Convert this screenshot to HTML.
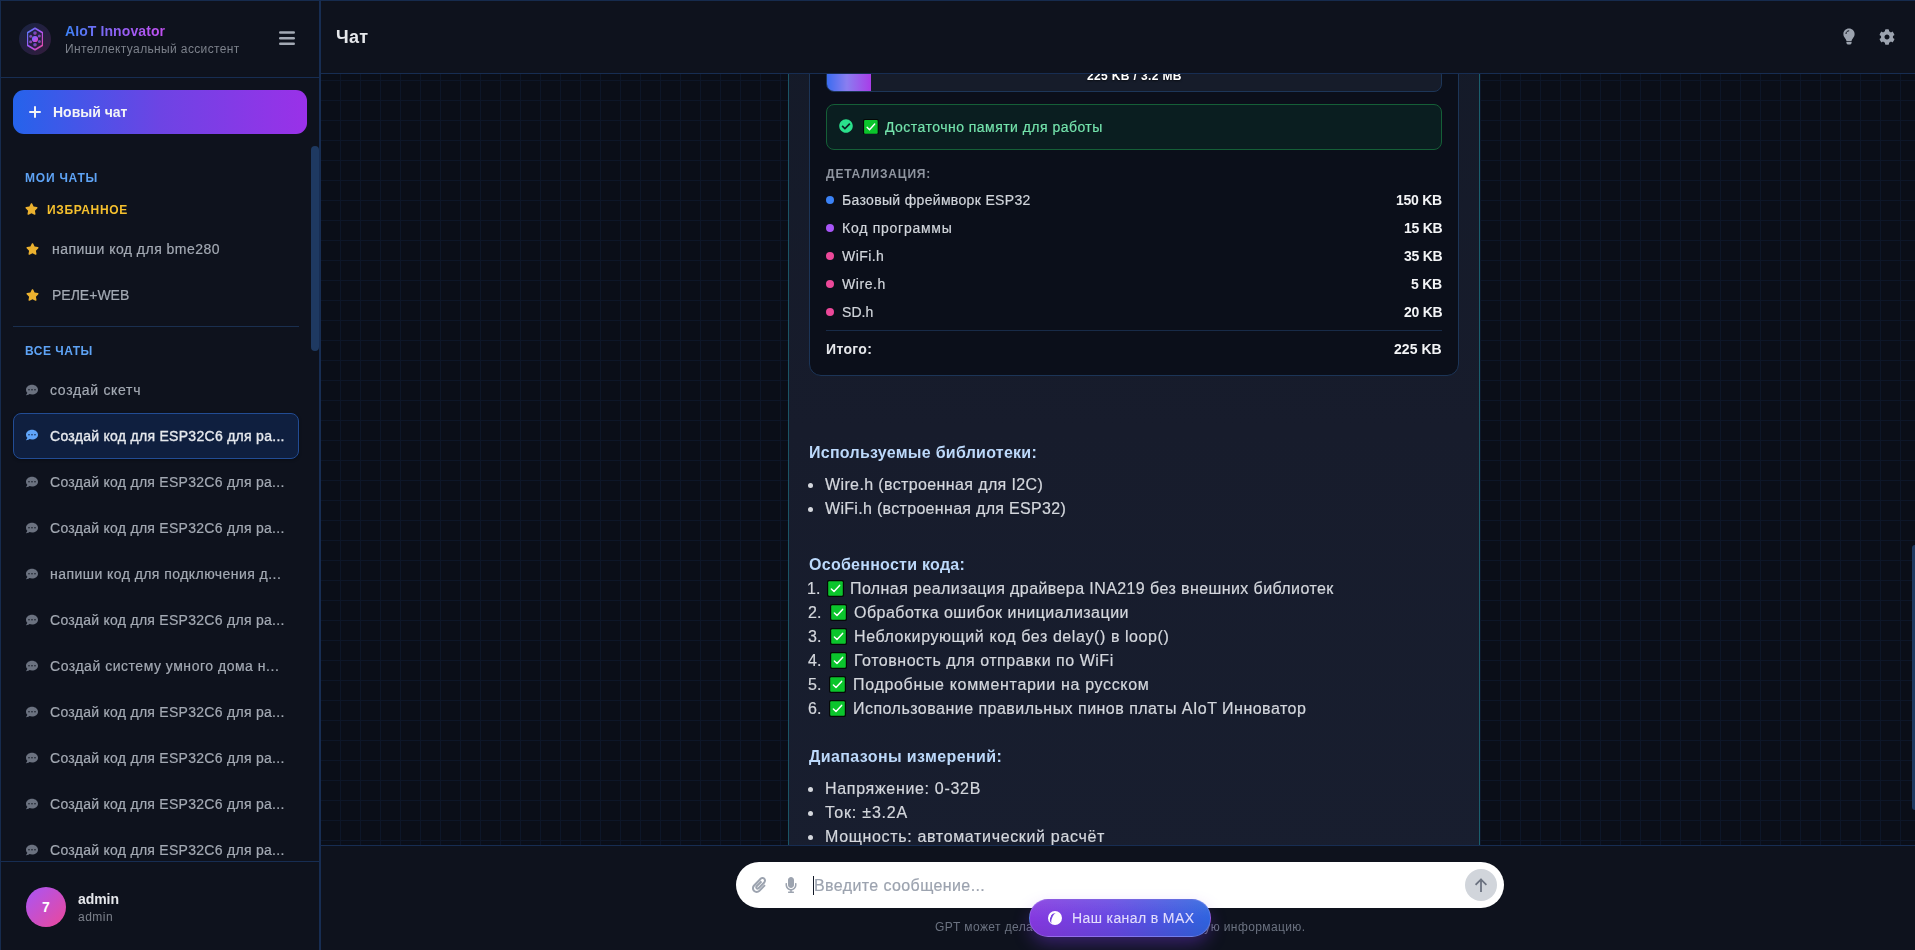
<!DOCTYPE html>
<html lang="ru">
<head>
<meta charset="utf-8">
<title>AIoT Innovator — Чат</title>
<style>
*{box-sizing:border-box;margin:0;padding:0}
html,body{width:1915px;height:950px;overflow:hidden}
body{position:relative;background:#0a0e18;font-family:"Liberation Sans",sans-serif;color:#d1d5db}
.abs{position:absolute}
.nw{white-space:nowrap;will-change:transform}
#topline{left:0;top:0;width:1915px;height:1px;background:#162b4e;z-index:50}
#leftline{left:0;top:0;width:1px;height:950px;background:#162b4e;z-index:50}
#mainline{left:320px;top:0;width:1px;height:950px;background:#172d52;z-index:50}
#sidebar{left:0;top:0;width:320px;height:950px;background:#0e121d;border-right:1px solid #172d52}
#sbhead{left:0;top:0;width:319px;height:78px;border-bottom:1px solid #172d52}
#logo{left:19px;top:23px;width:32px;height:32px;border-radius:50%;background:linear-gradient(135deg,#1a2442 0%,#251f40 55%,#361c3d 100%);overflow:visible}
#burger{left:279px;top:31px;width:16px;height:14px}
#newchat{left:13px;top:90px;width:294px;height:44px;border-radius:11px;background:linear-gradient(90deg,#2563eb 0%,#6d44e4 50%,#9a31e8 100%)}
#sblist{left:0;top:0;width:319px;height:861px;overflow:hidden;clip-path:inset(138px 0 0 0)}
#sbthumb{left:311px;top:146px;width:8px;height:205px;border-radius:4px;background:#1e3961}
.item{left:13px;width:286px;height:46px;border-radius:8px}
.item.active{background:#0f1f3f;border:1px solid #224c94;box-shadow:0 1px 3px rgba(0,0,0,.35)}
#sbfoot{left:0;top:861px;width:319px;height:1px;background:#172d52}
#avatar{left:26px;top:887px;width:40px;height:40px;border-radius:50%;background:linear-gradient(135deg,#a855f7,#ec4899);color:#fff;font-weight:700;font-size:14px;text-align:center;line-height:40px}
#mainhead{left:320px;top:0;width:1595px;height:74px;background:#0e121d;border-bottom:1px solid #172d52;z-index:3}
#chat{left:320px;top:74px;width:1595px;height:771px;overflow:hidden;background-color:#0a0e18;
 background-image:linear-gradient(#0d1628 1px,transparent 1px),linear-gradient(90deg,#0d1628 1px,transparent 1px);
 background-size:20px 20px;background-position:0 6px,0 0}
#pgthumb{left:1912px;top:545px;width:6px;height:265px;border-radius:3px;background:#1e3961;z-index:5}
#footer{left:320px;top:845px;width:1595px;height:105px;background:#0e121d;border-top:1px solid #172d52;z-index:3}
#chatclip{left:320px;top:74px;width:1595px;height:771px;overflow:hidden}
#bubble{left:788px;top:-20px;width:692px;height:900px;background:linear-gradient(180deg,#141a28 0%,#171c2c 50%,#181e2f 100%);border-left:1px solid #1b5566;border-right:1px solid #1b5e6c}
#card{left:809px;top:-20px;width:650px;height:396px;background:#0b0f1a;border:1px solid #1c3557;border-radius:12px}
#bar{left:826px;top:67px;width:616px;height:25px;background:#161c2a;border:1px solid #1d3658;border-radius:8px;overflow:hidden}
#barfill{left:0;top:0;width:44px;height:24px;background:linear-gradient(90deg,#3b6cf0 0%,#8a7ef0 45%,#a93de8 100%)}
#okbox{left:826px;top:104px;width:616px;height:46px;background:#0a1e20;border:1px solid #155f37;border-radius:8px}
.dot{width:8px;height:8px;border-radius:50%}
.bul{left:808px;width:5px;height:5px;border-radius:50%;background:#d4d7dd}
#inp{left:736px;top:862px;width:768px;height:46px;border-radius:23px;background:#fff;z-index:4}
#inp ~ svg, #inp ~ div{z-index:6}
#send{left:1465px;top:869px;width:32px;height:32px;border-radius:50%;background:#d1d5db}
#maxbtn{left:1029px;top:899px;width:182px;height:38px;border-radius:19px;background:linear-gradient(180deg,rgba(255,255,255,.1),rgba(255,255,255,0) 50%,rgba(0,0,0,.06)),linear-gradient(80deg,#8638df 0%,#6747e2 45%,#2d64de 100%);border:1px solid rgba(190,170,255,.3);box-shadow:0 8px 18px -2px rgba(124,58,237,.4)}

</style>
</head>
<body>
<svg width="0" height="0" style="position:absolute">
<defs>
<symbol id="i-star" viewBox="0 0 576 512"><path d="M259.3 17.8L194 150.2 47.9 171.5c-26.2 3.8-36.7 36.1-17.7 54.6l105.7 103-25 145.5c-4.5 26.3 23.2 46 46.4 33.7L288 439.6l130.7 68.7c23.2 12.2 50.9-7.4 46.4-33.7l-25-145.5 105.7-103c19-18.5 8.5-50.8-17.7-54.6L382 150.2 316.7 17.8c-11.7-23.6-45.6-23.9-57.4 0z"/></symbol>
<symbol id="i-chat" viewBox="0 0 512 512"><path d="M256 32C114.6 32 0 125.1 0 240c0 49.6 21.4 95 57 130.7C44.5 421.1 2.7 466 2.2 466.5c-2.2 2.3-2.8 5.7-1.5 8.7S4.8 480 8 480c66.3 0 116-31.8 140.6-51.4 32.7 12.3 69 19.4 107.4 19.4 141.4 0 256-93.1 256-208S397.4 32 256 32zM128 272c-17.7 0-32-14.3-32-32s14.3-32 32-32 32 14.3 32 32-14.3 32-32 32zm128 0c-17.7 0-32-14.3-32-32s14.3-32 32-32 32 14.3 32 32-14.3 32-32 32zm128 0c-17.7 0-32-14.3-32-32s14.3-32 32-32 32 14.3 32 32-14.3 32-32 32z"/></symbol>
<symbol id="i-emo" viewBox="0 0 17 17"><rect x="0" y="0" width="17" height="17" rx="2" fill="#050807"/><rect x="1.2" y="1.2" width="14.6" height="14.6" rx="1" fill="#0bc52c"/><path d="M4.4 9l2.6 2.5 5.6-6.1" fill="none" stroke="#fff" stroke-width="1.5" stroke-linecap="round" stroke-linejoin="round"/></symbol>
</defs></svg>
<div id="topline" class="abs"></div><div id="leftline" class="abs"></div><div id="mainline" class="abs"></div>
<div id="sidebar" class="abs"><div id="sbhead" class="abs"></div>
<div id="logo" class="abs"><svg class="abs" style="left:8px;top:4px" width="16" height="24" viewBox="0 0 16 24">
<defs><linearGradient id="lg1" x1="0" y1="0" x2="1" y2="1"><stop offset="0" stop-color="#4f7cf7"/><stop offset=".5" stop-color="#a855f7"/><stop offset="1" stop-color="#ec4899"/></linearGradient></defs>
<path d="M8 1.2L15.6 5.8V18.2L8 22.8L0.4 18.2V5.8Z" fill="none" stroke="url(#lg1)" stroke-width="1.6" stroke-linejoin="round"/>
<circle cx="8" cy="12" r="3.1" fill="url(#lg1)"/>
<g fill="url(#lg1)" opacity=".7"><circle cx="8" cy="6.1" r="1.8"/><circle cx="8" cy="17.8" r="1.8"/><circle cx="3.7" cy="9.3" r="1.5"/><circle cx="12.3" cy="9.1" r="1.5"/><circle cx="3.6" cy="14.7" r="1.5"/><circle cx="12.4" cy="14.6" r="1.5"/></g>
</svg></div>
<div class="abs nw" style="left:64.6px;top:24.05px;font-size:14px;line-height:14px;color:transparent;letter-spacing:0.094px;font-weight:700;background:linear-gradient(90deg,#3b82f6 0%,#8f62f5 50%,#c24ff0 100%);-webkit-background-clip:text;background-clip:text;">AIoT Innovator</div>
<div class="abs nw" style="left:64.5px;top:42.54px;font-size:12px;line-height:12px;color:#7c818b;letter-spacing:0.364px;">Интеллектуальный ассистент</div>
<svg id="burger" class="abs" viewBox="0 0 16 14"><g fill="#a3a9b4"><rect x="0" y="0.3" width="16" height="2.5" rx="1.25"/><rect x="0" y="5.9" width="16" height="2.5" rx="1.25"/><rect x="0" y="11.5" width="16" height="2.5" rx="1.25"/></g></svg>
<div id="newchat" class="abs"><svg class="abs" style="left:16px;top:16px" width="12" height="12" viewBox="0 0 12 12"><path d="M6 1v10M1 6h10" stroke="#f3f4f6" stroke-width="2" stroke-linecap="round"/></svg></div>
<div class="abs nw" style="left:53.4px;top:105.05px;font-size:14px;line-height:14px;color:#f3f4f6;letter-spacing:-0.013px;font-weight:700;">Новый чат</div>
<div id="sblist" class="abs"><div class="abs nw" style="left:25px;top:172.44px;font-size:12px;line-height:12px;color:#5ea3f5;letter-spacing:0.775px;font-weight:700;">МОИ ЧАТЫ</div>
<svg class="abs" style="left:25px;top:203px" width="13" height="12" fill="#ebb12f"><use href="#i-star"/></svg>
<div class="abs nw" style="left:47px;top:204.34px;font-size:12px;line-height:12px;color:#f5c02e;letter-spacing:0.642px;font-weight:700;">ИЗБРАННОЕ</div>
<svg class="abs" style="left:26px;top:243px" width="13" height="12" fill="#ebb12f"><use href="#i-star"/></svg>
<div class="abs nw" style="left:51.8px;top:242.15px;font-size:14px;line-height:14px;color:#a3a9b3;letter-spacing:0.470px;-webkit-text-stroke:0.2px #a3a9b3;">напиши код для bme280</div>
<svg class="abs" style="left:26px;top:289px" width="13" height="12" fill="#ebb12f"><use href="#i-star"/></svg>
<div class="abs nw" style="left:51.8px;top:288.15px;font-size:14px;line-height:14px;color:#a3a9b3;letter-spacing:0.003px;-webkit-text-stroke:0.2px #a3a9b3;">РЕЛЕ+WEB</div>
<div class="abs" style="left:13px;top:326px;width:286px;height:1px;background:#1a2f4f"></div>
<div class="abs nw" style="left:25px;top:345.34px;font-size:12px;line-height:12px;color:#5ea3f5;letter-spacing:0.500px;font-weight:700;">ВСЕ ЧАТЫ</div>
<svg class="abs" style="left:26px;top:383.5px" width="12" height="12" fill="#6b7280"><use href="#i-chat"/></svg>
<div class="abs nw" style="left:50px;top:383.15px;font-size:14px;line-height:14px;color:#a3a9b3;letter-spacing:0.693px;-webkit-text-stroke:0.2px #a3a9b3;">создай скетч</div>
<div class="abs item active" style="top:413px"></div>
<svg class="abs" style="left:26px;top:428.5px" width="12" height="12" fill="#60a5fa"><use href="#i-chat"/></svg>
<div class="abs nw" style="left:50px;top:429.15px;font-size:14px;line-height:14px;color:#e6e9ee;letter-spacing:0.288px;-webkit-text-stroke:.35px #e6e9ee;">Создай код для ESP32C6 для ра...</div>
<svg class="abs" style="left:26px;top:475.5px" width="12" height="12" fill="#6b7280"><use href="#i-chat"/></svg>
<div class="abs nw" style="left:50px;top:475.15px;font-size:14px;line-height:14px;color:#a3a9b3;letter-spacing:0.281px;-webkit-text-stroke:0.2px #a3a9b3;">Создай код для ESP32C6 для ра...</div>
<svg class="abs" style="left:26px;top:521.5px" width="12" height="12" fill="#6b7280"><use href="#i-chat"/></svg>
<div class="abs nw" style="left:50px;top:521.15px;font-size:14px;line-height:14px;color:#a3a9b3;letter-spacing:0.281px;-webkit-text-stroke:0.2px #a3a9b3;">Создай код для ESP32C6 для ра...</div>
<svg class="abs" style="left:26px;top:567.5px" width="12" height="12" fill="#6b7280"><use href="#i-chat"/></svg>
<div class="abs nw" style="left:50px;top:567.15px;font-size:14px;line-height:14px;color:#a3a9b3;letter-spacing:0.450px;-webkit-text-stroke:0.2px #a3a9b3;">напиши код для подключения д...</div>
<svg class="abs" style="left:26px;top:613.5px" width="12" height="12" fill="#6b7280"><use href="#i-chat"/></svg>
<div class="abs nw" style="left:50px;top:613.15px;font-size:14px;line-height:14px;color:#a3a9b3;letter-spacing:0.281px;-webkit-text-stroke:0.2px #a3a9b3;">Создай код для ESP32C6 для ра...</div>
<svg class="abs" style="left:26px;top:659.5px" width="12" height="12" fill="#6b7280"><use href="#i-chat"/></svg>
<div class="abs nw" style="left:50px;top:659.15px;font-size:14px;line-height:14px;color:#a3a9b3;letter-spacing:0.521px;-webkit-text-stroke:0.2px #a3a9b3;">Создай систему умного дома н...</div>
<svg class="abs" style="left:26px;top:705.5px" width="12" height="12" fill="#6b7280"><use href="#i-chat"/></svg>
<div class="abs nw" style="left:50px;top:705.15px;font-size:14px;line-height:14px;color:#a3a9b3;letter-spacing:0.281px;-webkit-text-stroke:0.2px #a3a9b3;">Создай код для ESP32C6 для ра...</div>
<svg class="abs" style="left:26px;top:751.5px" width="12" height="12" fill="#6b7280"><use href="#i-chat"/></svg>
<div class="abs nw" style="left:50px;top:751.15px;font-size:14px;line-height:14px;color:#a3a9b3;letter-spacing:0.281px;-webkit-text-stroke:0.2px #a3a9b3;">Создай код для ESP32C6 для ра...</div>
<svg class="abs" style="left:26px;top:797.5px" width="12" height="12" fill="#6b7280"><use href="#i-chat"/></svg>
<div class="abs nw" style="left:50px;top:797.15px;font-size:14px;line-height:14px;color:#a3a9b3;letter-spacing:0.281px;-webkit-text-stroke:0.2px #a3a9b3;">Создай код для ESP32C6 для ра...</div>
<svg class="abs" style="left:26px;top:843.5px" width="12" height="12" fill="#6b7280"><use href="#i-chat"/></svg>
<div class="abs nw" style="left:50px;top:843.15px;font-size:14px;line-height:14px;color:#a3a9b3;letter-spacing:0.281px;-webkit-text-stroke:0.2px #a3a9b3;">Создай код для ESP32C6 для ра...</div></div>
<div id="sbthumb" class="abs"></div>
<div id="sbfoot" class="abs"></div>
<div id="avatar" class="abs">7</div>
<div class="abs nw" style="left:78.1px;top:891.75px;font-size:14px;line-height:14px;color:#e5e7eb;letter-spacing:-0.059px;font-weight:700;">admin</div>
<div class="abs nw" style="left:78.1px;top:910.84px;font-size:12px;line-height:12px;color:#7c818b;letter-spacing:0.503px;">admin</div></div>
<div id="mainhead" class="abs"></div>
<div class="abs" style="left:0;top:0;z-index:4"><div class="abs nw" style="left:336.3px;top:27.96px;font-size:18px;line-height:18px;color:#e5e7eb;letter-spacing:0.258px;font-weight:700;">Чат</div>
<svg class="abs" style="left:1843px;top:28px" width="12" height="17" viewBox="0 0 12 17"><path fill="#9ca3af" d="M6 0.6C2.8 0.6 0.4 3 0.4 6.1c0 1.6.6 2.8 1.5 3.9.8 1 1.4 1.8 1.6 3h5c.2-1.2.8-2 1.6-3 .9-1.1 1.5-2.3 1.5-3.9C11.6 3 9.2.6 6 .6z"/><path fill="#9ca3af" d="M3.4 13.8h5.2v1.1c0 .3-.1.5-.3.7l-.6.7c-.2.2-.5.3-.8.3H5.1c-.3 0-.6-.1-.8-.3l-.6-.7c-.2-.2-.3-.4-.3-.7z"/><path d="M3 5.6C3 4 4.2 2.8 5.8 2.8" fill="none" stroke="#0e121d" stroke-width="1" stroke-linecap="round"/></svg>
<svg class="abs" style="left:1879px;top:29px" width="16" height="16" viewBox="0 0 512 512"><path fill="#9ca3af" d="M487.4 315.7l-42.6-24.6c4.3-23.2 4.3-47 0-70.2l42.6-24.6c4.9-2.8 7.1-8.6 5.5-14-11.1-35.6-30-67.8-54.7-94.6-3.8-4.1-10-5.1-14.8-2.3L380.8 110c-17.9-15.4-38.5-27.3-60.8-35.1V25.8c0-5.6-3.9-10.5-9.4-11.7-36.7-8.2-74.300-7.8-109.2 0-5.5 1.2-9.4 6.1-9.4 11.7V75c-22.2 7.9-42.8 19.8-60.8 35.1L88.7 85.5c-4.9-2.8-11-1.9-14.8 2.3-24.7 26.7-43.6 58.9-54.7 94.6-1.7 5.4.6 11.2 5.5 14L67.3 221c-4.3 23.2-4.3 47 0 70.2l-42.6 24.6c-4.9 2.8-7.1 8.6-5.5 14 11.1 35.6 30 67.8 54.7 94.6 3.8 4.1 10 5.1 14.8 2.3l42.6-24.6c17.9 15.4 38.5 27.3 60.8 35.1v49.2c0 5.6 3.9 10.5 9.4 11.7 36.7 8.2 74.3 7.8 109.2 0 5.5-1.2 9.4-6.1 9.4-11.7v-49.2c22.2-7.9 42.8-19.8 60.8-35.1l42.6 24.6c4.9 2.8 11 1.9 14.8-2.3 24.7-26.7 43.6-58.9 54.7-94.6 1.5-5.5-.7-11.3-5.6-14.1zM256 336c-44.1 0-80-35.9-80-80s35.9-80 80-80 80 35.9 80 80-35.9 80-80 80z"/></svg></div>
<div id="chat" class="abs"></div>
<div id="chatclip" class="abs"><div class="abs" style="left:-320px;top:-74px;width:1915px;height:950px"><div id="bubble" class="abs"></div>
<div id="card" class="abs"></div>
<div id="bar" class="abs"><div id="barfill" class="abs"></div></div>
<div class="abs nw" style="left:1087px;top:69.84px;font-size:12px;line-height:12px;color:#ffffff;letter-spacing:0.366px;font-weight:700;text-shadow:0 1px 2px rgba(0,0,0,.6);">225 KB / 3.2 MB</div>
<div id="okbox" class="abs"></div>
<svg class="abs" style="left:839px;top:119px" width="14" height="14" viewBox="0 0 512 512"><path fill="#2ae08b" d="M504 256c0 136.967-111.033 248-248 248S8 392.967 8 256 119.033 8 256 8s248 111.033 248 248zM227.314 387.314l184-184c6.248-6.248 6.248-16.379 0-22.627l-22.627-22.627c-6.248-6.249-16.379-6.249-22.628 0L216 308.118l-70.059-70.059c-6.248-6.248-16.379-6.248-22.628 0l-22.627 22.627c-6.248 6.248-6.248 16.379 0 22.627l104 104c6.249 6.249 16.379 6.249 22.628.001z"/></svg>
<svg class="abs" style="left:862.8px;top:118.6px" width="15.8" height="15.8"><use href="#i-emo"/></svg>
<div class="abs nw" style="left:884.6px;top:120.35px;font-size:14px;line-height:14px;color:#74e3ac;letter-spacing:0.469px;-webkit-text-stroke:0.2px #74e3ac;">Достаточно памяти для работы</div>
<div class="abs nw" style="left:826px;top:168.34px;font-size:12px;line-height:12px;color:#8f95a0;letter-spacing:0.828px;font-weight:700;">ДЕТАЛИЗАЦИЯ:</div>
<div class="abs dot" style="left:826px;top:195.8px;background:#3b82f6"></div>
<div class="abs nw" style="left:842px;top:192.95px;font-size:14px;line-height:14px;color:#d1d5db;letter-spacing:0.328px;-webkit-text-stroke:0.2px #d1d5db;">Базовый фреймворк ESP32</div>
<div class="abs nw" style="right:473px;top:192.95px;font-size:14px;line-height:14px;color:#f3f4f6;letter-spacing:-0.25px;font-weight:700;">150 KB</div>
<div class="abs dot" style="left:826px;top:223.8px;background:#a855f7"></div>
<div class="abs nw" style="left:842px;top:220.95px;font-size:14px;line-height:14px;color:#d1d5db;letter-spacing:0.746px;-webkit-text-stroke:0.2px #d1d5db;">Код программы</div>
<div class="abs nw" style="right:473px;top:220.95px;font-size:14px;line-height:14px;color:#f3f4f6;letter-spacing:-0.25px;font-weight:700;">15 KB</div>
<div class="abs dot" style="left:826px;top:251.8px;background:#ec4899"></div>
<div class="abs nw" style="left:842px;top:248.95px;font-size:14px;line-height:14px;color:#d1d5db;letter-spacing:0.426px;-webkit-text-stroke:0.2px #d1d5db;">WiFi.h</div>
<div class="abs nw" style="right:473px;top:248.95px;font-size:14px;line-height:14px;color:#f3f4f6;letter-spacing:-0.25px;font-weight:700;">35 KB</div>
<div class="abs dot" style="left:826px;top:279.8px;background:#ec4899"></div>
<div class="abs nw" style="left:842px;top:276.95px;font-size:14px;line-height:14px;color:#d1d5db;letter-spacing:0.569px;-webkit-text-stroke:0.2px #d1d5db;">Wire.h</div>
<div class="abs nw" style="right:473px;top:276.95px;font-size:14px;line-height:14px;color:#f3f4f6;letter-spacing:-0.25px;font-weight:700;">5 KB</div>
<div class="abs dot" style="left:826px;top:307.8px;background:#ec4899"></div>
<div class="abs nw" style="left:842px;top:304.95px;font-size:14px;line-height:14px;color:#d1d5db;letter-spacing:0.058px;-webkit-text-stroke:0.2px #d1d5db;">SD.h</div>
<div class="abs nw" style="right:473px;top:304.95px;font-size:14px;line-height:14px;color:#f3f4f6;letter-spacing:-0.25px;font-weight:700;">20 KB</div>
<div class="abs" style="left:826px;top:330px;width:616px;height:1px;background:#182b48"></div>
<div class="abs nw" style="left:825.7px;top:341.85px;font-size:14px;line-height:14px;color:#e5e7eb;letter-spacing:0.329px;font-weight:700;">Итого:</div>
<div class="abs nw" style="right:473px;top:341.85px;font-size:14px;line-height:14px;color:#f3f4f6;letter-spacing:0.05px;font-weight:700;">225 KB</div>
<div class="abs nw" style="left:809.3px;top:444.86px;font-size:16px;line-height:16px;color:#bcd9fb;letter-spacing:0.265px;font-weight:700;">Используемые библиотеки:</div>
<div class="abs bul" style="top:483px"></div>
<div class="abs nw" style="left:825.3px;top:477.06px;font-size:16px;line-height:16px;color:#d4d7dd;letter-spacing:0.376px;-webkit-text-stroke:0.2px #d4d7dd;">Wire.h (встроенная для I2C)</div>
<div class="abs bul" style="top:507px"></div>
<div class="abs nw" style="left:825.3px;top:501.06px;font-size:16px;line-height:16px;color:#d4d7dd;letter-spacing:0.313px;-webkit-text-stroke:0.2px #d4d7dd;">WiFi.h (встроенная для ESP32)</div>
<div class="abs nw" style="left:809px;top:557.06px;font-size:16px;line-height:16px;color:#bcd9fb;letter-spacing:0.266px;font-weight:700;">Особенности кода:</div>
<div class="abs nw" style="left:807.2px;top:580.76px;font-size:16px;line-height:16px;color:#d4d7dd;letter-spacing:0;-webkit-text-stroke:0.2px #d4d7dd;">1.</div>
<svg class="abs" style="left:827.3px;top:579.7px" width="17" height="17"><use href="#i-emo"/></svg>
<div class="abs nw" style="left:850.2px;top:580.76px;font-size:16px;line-height:16px;color:#d4d7dd;letter-spacing:0.413px;-webkit-text-stroke:0.2px #d4d7dd;">Полная реализация драйвера INA219 без внешних библиотек</div>
<div class="abs nw" style="left:808.0px;top:604.76px;font-size:16px;line-height:16px;color:#d4d7dd;letter-spacing:0;-webkit-text-stroke:0.2px #d4d7dd;">2.</div>
<svg class="abs" style="left:830.2px;top:603.7px" width="17" height="17"><use href="#i-emo"/></svg>
<div class="abs nw" style="left:853.7px;top:604.76px;font-size:16px;line-height:16px;color:#d4d7dd;letter-spacing:0.480px;-webkit-text-stroke:0.2px #d4d7dd;">Обработка ошибок инициализации</div>
<div class="abs nw" style="left:808.0px;top:628.76px;font-size:16px;line-height:16px;color:#d4d7dd;letter-spacing:0;-webkit-text-stroke:0.2px #d4d7dd;">3.</div>
<svg class="abs" style="left:830.2px;top:627.7px" width="17" height="17"><use href="#i-emo"/></svg>
<div class="abs nw" style="left:853.7px;top:628.76px;font-size:16px;line-height:16px;color:#d4d7dd;letter-spacing:0.581px;-webkit-text-stroke:0.2px #d4d7dd;">Неблокирующий код без delay() в loop()</div>
<div class="abs nw" style="left:808.0px;top:652.76px;font-size:16px;line-height:16px;color:#d4d7dd;letter-spacing:0;-webkit-text-stroke:0.2px #d4d7dd;">4.</div>
<svg class="abs" style="left:830.2px;top:651.7px" width="17" height="17"><use href="#i-emo"/></svg>
<div class="abs nw" style="left:853.7px;top:652.76px;font-size:16px;line-height:16px;color:#d4d7dd;letter-spacing:0.522px;-webkit-text-stroke:0.2px #d4d7dd;">Готовность для отправки по WiFi</div>
<div class="abs nw" style="left:808.0px;top:676.76px;font-size:16px;line-height:16px;color:#d4d7dd;letter-spacing:0;-webkit-text-stroke:0.2px #d4d7dd;">5.</div>
<svg class="abs" style="left:829.3px;top:675.7px" width="17" height="17"><use href="#i-emo"/></svg>
<div class="abs nw" style="left:853.1px;top:676.76px;font-size:16px;line-height:16px;color:#d4d7dd;letter-spacing:0.674px;-webkit-text-stroke:0.2px #d4d7dd;">Подробные комментарии на русском</div>
<div class="abs nw" style="left:808.0px;top:700.76px;font-size:16px;line-height:16px;color:#d4d7dd;letter-spacing:0;-webkit-text-stroke:0.2px #d4d7dd;">6.</div>
<svg class="abs" style="left:829.3px;top:699.7px" width="17" height="17"><use href="#i-emo"/></svg>
<div class="abs nw" style="left:853.1px;top:700.76px;font-size:16px;line-height:16px;color:#d4d7dd;letter-spacing:0.475px;-webkit-text-stroke:0.2px #d4d7dd;">Использование правильных пинов платы AIoT Инноватор</div>
<div class="abs nw" style="left:809px;top:748.86px;font-size:16px;line-height:16px;color:#bcd9fb;letter-spacing:0.387px;font-weight:700;">Диапазоны измерений:</div>
<div class="abs bul" style="top:786.6px"></div>
<div class="abs nw" style="left:825.3px;top:780.66px;font-size:16px;line-height:16px;color:#d4d7dd;letter-spacing:0.684px;-webkit-text-stroke:0.2px #d4d7dd;">Напряжение: 0-32В</div>
<div class="abs bul" style="top:810.6px"></div>
<div class="abs nw" style="left:825.3px;top:804.66px;font-size:16px;line-height:16px;color:#d4d7dd;letter-spacing:0.798px;-webkit-text-stroke:0.2px #d4d7dd;">Ток: ±3.2А</div>
<div class="abs bul" style="top:834.6px"></div>
<div class="abs nw" style="left:825.3px;top:828.66px;font-size:16px;line-height:16px;color:#d4d7dd;letter-spacing:0.660px;-webkit-text-stroke:0.2px #d4d7dd;">Мощность: автоматический расчёт</div></div></div>
<div id="pgthumb" class="abs"></div>
<div id="footer" class="abs"></div>
<div id="inp" class="abs"></div>
<svg class="abs" style="left:752px;top:877px" width="14" height="16" viewBox="0 0 448 512"><path fill="#9ca3af" d="M43.246 466.142c-58.43-60.289-57.341-157.511 1.386-217.581L254.392 34c44.316-45.332 116.351-45.336 160.671 0 43.89 44.894 43.943 117.329 0 162.276L232.214 383.128c-29.855 30.537-78.633 30.111-107.982-.998-28.275-29.97-27.368-77.473 1.452-106.953l143.743-146.835c6.182-6.314 16.312-6.422 22.626-.241l22.861 22.379c6.315 6.182 6.422 16.312.241 22.626L171.427 319.927c-4.932 5.045-5.236 13.428-.648 18.292 4.372 4.634 11.245 4.711 15.688.165l182.849-186.851c19.613-20.062 19.613-52.725-.011-72.798-19.189-19.627-49.957-19.637-69.154 0L90.39 293.295c-34.763 35.56-35.299 93.12-1.191 128.313 34.01 35.093 88.985 35.137 123.058.286l172.06-175.999c6.177-6.319 16.307-6.433 22.626-.256l22.877 22.364c6.319 6.177 6.434 16.307.256 22.626l-172.06 175.998c-59.576 60.938-155.943 60.216-214.77-.485z"/></svg>
<svg class="abs" style="left:785px;top:877px" width="12" height="16" viewBox="0 0 352 512"><path fill="#9ca3af" d="M176 352c53.02 0 96-42.98 96-96V96c0-53.02-42.98-96-96-96S80 42.980 80 96v160c0 53.02 42.98 96 96 96zm160-160h-16c-8.84 0-16 7.16-16 16v48c0 74.8-64.49 134.82-140.79 127.38C96.71 376.89 48 317.11 48 250.3V208c0-8.84-7.16-16-16-16H16c-8.84 0-16 7.16-16 16v40.16c0 89.64 63.97 169.55 152 181.69V464H96c-8.84 0-16 7.16-16 16v16c0 8.84 7.16 16 16 16h160c8.84 0 16-7.16 16-16v-16c0-8.84-7.16-16-16-16h-56v-33.77C285.71 418.47 352 344.9 352 256v-48c0-8.84-7.16-16-16-16z"/></svg>
<div class="abs" style="left:813px;top:876px;width:1px;height:19px;background:#111827"></div>
<div class="abs nw" style="left:814.2px;top:878.06px;font-size:16px;line-height:16px;color:#9ca3af;letter-spacing:0.392px;-webkit-text-stroke:0.2px #9ca3af;">Введите сообщение...</div>
<div id="send" class="abs"><svg class="abs" style="left:10px;top:9px" width="12" height="14" viewBox="0 0 12 14"><path d="M6 13V1.6M1.2 6.2L6 1.4l4.8 4.8" fill="none" stroke="#6b7280" stroke-width="1.8" stroke-linecap="square"/></svg></div>
<div class="abs nw" style="left:935.2px;top:921.34px;font-size:12px;line-height:12px;color:#6b7280;letter-spacing:0.393px;">GPT может делать ошибки. Проверяйте важную информацию.</div>
<div id="maxbtn" class="abs"><div class="abs" style="left:18px;top:11px;width:14px;height:14px;border-radius:50%;background:#fff"></div><div class="abs" style="left:20px;top:13px;width:8px;height:11px;border-radius:50%;border-left:2px solid #7a45e0;border-top:0;transform:rotate(22deg)"></div></div>
<div class="abs nw" style="left:1071.6px;top:911.15px;font-size:14px;line-height:14px;color:#e2ddfc;letter-spacing:0.394px;-webkit-text-stroke:.1px #e2ddfc;">Наш канал в MAX</div>
</body>
</html>
